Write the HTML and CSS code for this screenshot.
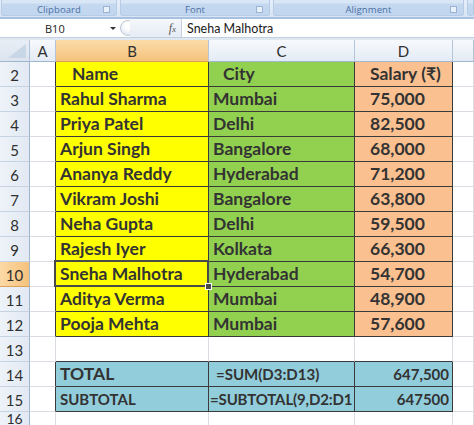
FILE: index.html
```html
<!DOCTYPE html>
<html>
<head>
<meta charset="utf-8">
<link rel="stylesheet" href="styles.css">
</head>
<body>
<div class="ribbon">
  <div class="group g1"><span class="glabel">Clipboard</span><span class="launch"></span></div>
  <div class="group g2"><span class="glabel">Font</span><span class="launch"></span></div>
  <div class="group g3"><span class="glabel">Alignment</span><span class="launch"></span></div>
  <div class="group g4"></div>
</div>
<div class="fbar">
  <div class="namebox"><span class="nbtext">B10</span><span class="arrow"></span></div>
  <div class="roundbtn"></div>
  <div class="fxarea"><span class="fx">f<span class="fxx">x</span></span></div>
  <div class="finput">Sneha Malhotra</div>
</div>
<div class="gap"></div>
<div class="sheet">
  <div class="h corner"><svg width="29" height="21" viewBox="0 0 29 21"><polygon points="26,4 26,18 8,18" fill="#c9d6e6"/></svg></div>
  <div class="h ch">A</div>
  <div class="h ch sel">B</div>
  <div class="h ch">C</div>
  <div class="h ch">D</div>
  <div class="h ch"></div>

  <div class="h rh">2</div><div class="c edge"></div>
  <div class="c y dk hdr-b">Name</div><div class="c g dk hdr-c">City</div><div class="c p dk pd">Salary (₹)</div><div class="c"></div>

  <div class="h rh">3</div><div class="c edge"></div>
  <div class="c y dk">Rahul Sharma</div><div class="c g dk">Mumbai</div><div class="c p dk pd">75,000</div><div class="c"></div>

  <div class="h rh">4</div><div class="c edge"></div>
  <div class="c y dk">Priya Patel</div><div class="c g dk">Delhi</div><div class="c p dk pd">82,500</div><div class="c"></div>

  <div class="h rh">5</div><div class="c edge"></div>
  <div class="c y dk">Arjun Singh</div><div class="c g dk">Bangalore</div><div class="c p dk pd">68,000</div><div class="c"></div>

  <div class="h rh">6</div><div class="c edge"></div>
  <div class="c y dk">Ananya Reddy</div><div class="c g dk">Hyderabad</div><div class="c p dk pd">71,200</div><div class="c"></div>

  <div class="h rh">7</div><div class="c edge"></div>
  <div class="c y dk">Vikram Joshi</div><div class="c g dk">Bangalore</div><div class="c p dk pd">63,800</div><div class="c"></div>

  <div class="h rh">8</div><div class="c edge"></div>
  <div class="c y dk">Neha Gupta</div><div class="c g dk">Delhi</div><div class="c p dk pd">59,500</div><div class="c"></div>

  <div class="h rh">9</div><div class="c edge"></div>
  <div class="c y dk">Rajesh Iyer</div><div class="c g dk">Kolkata</div><div class="c p dk pd">66,300</div><div class="c"></div>

  <div class="h rh sel">10</div><div class="c edge"></div>
  <div class="c y dk active">Sneha Malhotra<span class="handle"></span></div><div class="c g dk">Hyderabad</div><div class="c p dk pd">54,700</div><div class="c"></div>

  <div class="h rh">11</div><div class="c edge"></div>
  <div class="c y dk">Aditya Verma</div><div class="c g dk">Mumbai</div><div class="c p dk pd">48,900</div><div class="c"></div>

  <div class="h rh">12</div><div class="c edge"></div>
  <div class="c y dk">Pooja Mehta</div><div class="c g dk">Mumbai</div><div class="c p dk pd">57,600</div><div class="c"></div>

  <div class="h rh">13</div><div class="c"></div>
  <div class="c above"></div><div class="c above"></div><div class="c above"></div><div class="c"></div>

  <div class="h rh">14</div><div class="c edge"></div>
  <div class="c b dk total">TOTAL</div><div class="c b dk small sum">=SUM(D3:D13)</div><div class="c b dk small num">647,500</div><div class="c"></div>

  <div class="h rh">15</div><div class="c edge"></div>
  <div class="c b dk small">SUBTOTAL</div><div class="c b dk small clip">=SUBTOTAL(9,D2:D1</div><div class="c b dk small num">647500</div><div class="c"></div>

  <div class="h rh last">16</div><div class="c"></div>
  <div class="c"></div><div class="c"></div><div class="c"></div><div class="c"></div>
</div>
</body>
</html>
```

FILE: styles.css
```css
html, body {
  margin: 0;
  padding: 0;
  background: #ffffff;
  overflow: hidden;
}
body {
  width: 474px;
  height: 425px;
  font-family: Lato, "DejaVu Sans", sans-serif;
}

/* ribbon */
.ribbon {
  height: 17px;
  display: flex;
  gap: 3px;
  padding-left: 1px;
  background: linear-gradient(#e6eff9, #d6e4f4);
  border-bottom: 2px solid #a8c1e0;
  overflow: hidden;
}
.group {
  height: 16px;
  display: flex;
  align-items: flex-start;
  justify-content: center;
  position: relative;
  background: linear-gradient(#d8e6f6 0, #d8e6f6 3px, #c4d8ef 4px, #c1d6ef 100%);
  border: 1px solid #b6cbe6;
  border-top: none;
  border-radius: 0 0 3px 3px;
  box-sizing: border-box;
}
.g1 { width: 116px; }
.g2 { width: 150px; }
.g3 { width: 191px; }
.g4 { flex: 1; }
.glabel {
  font-family: "Open Sans", sans-serif;
  font-size: 9.5px;
  line-height: 10px;
  color: #4a6fa5;
  letter-spacing: 0.1px;
  margin-top: 5px;
}
.launch {
  position: absolute;
  right: 6px;
  top: 6px;
  width: 5px;
  height: 5px;
  border: 1px solid #9bb3d3;
  background: #e8f0fa;
}

/* formula bar */
.fbar {
  height: 18px;
  display: flex;
  background: #ffffff;
  border-bottom: 1px solid #c0cfe2;
}
.namebox {
  width: 120px;
  display: flex;
  align-items: center;
  position: relative;
  font-family: "Open Sans", sans-serif;
  font-size: 11px;
  color: #222;
}
.nbtext {
  margin-left: 45px;
}
.arrow {
  position: absolute;
  left: 110px;
  top: 8px;
  width: 0;
  height: 0;
  border-left: 3px solid transparent;
  border-right: 3px solid transparent;
  border-top: 3px solid #333;
}
.roundbtn {
  width: 16px;
  height: 16px;
  margin-top: 1px;
  border-radius: 50%;
  border: 1px solid #b9c6d6;
  box-sizing: border-box;
  background: radial-gradient(circle at 55% 30%, #ffffff 0 30%, #e3e9f1 80%);
  clip-path: inset(0 6px 0 0);
}
.fxarea {
  width: 51px;
  margin-left: -6px;
  display: flex;
  align-items: center;
  justify-content: flex-end;
  background: linear-gradient(#f4f7fb, #e6ecf4);
  border-right: 1px solid #c6d2e0;
}
.fx {
  font-family: "Liberation Serif", serif;
  font-style: italic;
  font-size: 12px;
  color: #555;
  margin-right: 5px;
}
.fxx {
  font-size: 9px;
}
.finput {
  flex: 1;
  display: flex;
  align-items: center;
  padding-left: 5px;
  font-family: Lato, sans-serif;
  font-size: 12.5px;
  color: #1a1a1a;
}
.gap {
  height: 2px;
  background: #dfe7f1;
}

/* sheet */
.sheet {
  display: grid;
  grid-template-columns: 30px 26px 153px 146px 98px 21px;
  grid-template-rows: 22px repeat(14, 25px) 14px;
  overflow: hidden;
}
.h {
  box-sizing: border-box;
  background: linear-gradient(#f7f9fc, #e4ebf5);
  border-right: 1px solid #b3c4d8;
  border-bottom: 1px solid #9eb6ce;
  color: #2f2f2f;
  font-size: 15px;
  display: flex;
  align-items: center;
  justify-content: center;
}
.corner {
  background: linear-gradient(#e8eef6, #dbe4ef);
  padding: 0;
}
.corner svg { display: block; }
.ch { padding-top: 1px; }
.rh {
  background: linear-gradient(90deg, #eef3f9, #e2e9f3);
  border-bottom: 1px solid #c5d3e3;
  border-right: 1px solid #9eb6ce;
  padding-top: 2px;
}
.rh.last {
  align-items: flex-start;
  padding-top: 1px;
  font-size: 14px;
  line-height: 12px;
  border-bottom: none;
}
.h.sel {
  background: linear-gradient(#fbdcaa, #f6c27c);
  border-bottom-color: #d9a25a;
}
.rh.sel {
  background: linear-gradient(90deg, #fbd9a6, #f6c27c);
}

.c {
  box-sizing: border-box;
  border-right: 1px solid #d9dde3;
  border-bottom: 1px solid #d9dde3;
  font-weight: 700;
  font-size: 17.5px;
  color: #333333;
  display: flex;
  align-items: flex-end;
  padding: 0 0 2px 4px;
  white-space: nowrap;
  overflow: hidden;
}
.edge { border-right-color: #3a3a3a; }
.above { border-bottom-color: #3a3a3a; }
.dk {
  border-right-color: #3a3a3a;
  border-bottom-color: #3a3a3a;
}
.y { background: #ffff00; }
.g { background: #92d050; }
.p { background: #fac090; }
.b { background: #92cddc; }
.hdr-b { padding-left: 16px; }
.hdr-c { padding-left: 14px; }
.pd { padding-left: 15px; }
.total { font-size: 17.5px; }
.small { font-size: 15px; padding-bottom: 3px; }
.sum { padding-left: 7px; }
.clip { padding-left: 1px; letter-spacing: -0.15px; }
.num { justify-content: flex-end; padding-right: 3px; }

.active {
  position: relative;
  overflow: visible;
}
.active::after {
  content: "";
  position: absolute;
  left: -2px;
  top: -2px;
  right: -1px;
  bottom: -1px;
  border: 2px solid #4a4a4a;
  pointer-events: none;
}
.handle {
  position: absolute;
  right: -4px;
  bottom: -4px;
  width: 5px;
  height: 5px;
  background: #4a4a4a;
  border: 1px solid #ffffff;
  z-index: 2;
}
```
